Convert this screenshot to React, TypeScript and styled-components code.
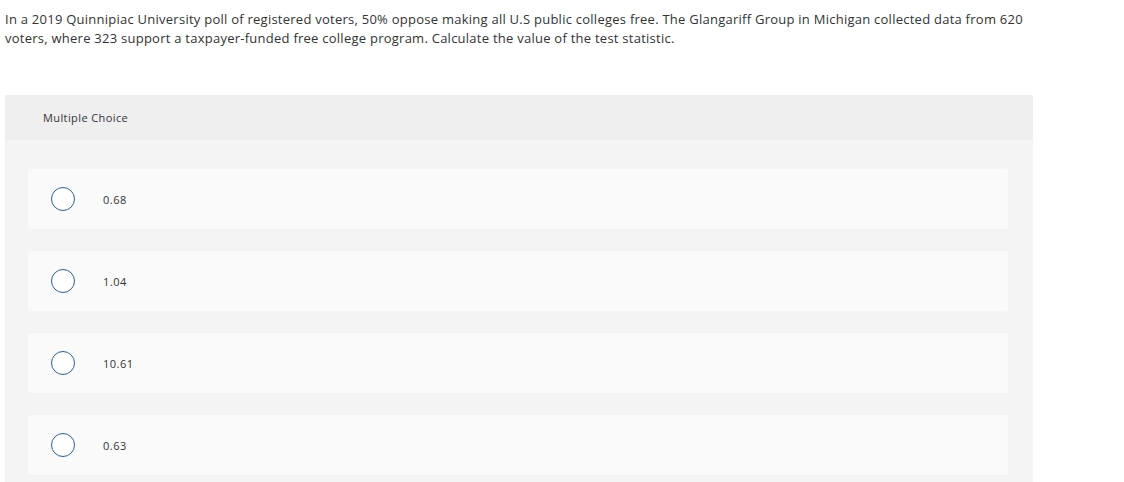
import { createGlobalStyle, styled } from "styled-components";

const options = ["0.68", "1.04", "10.61", "0.63"];

export default function App() {
	return (
		<>
			<GlobalStyle />
			<Page>
				<Question>
					In a 2019 Quinnipiac University poll of registered voters, 50% oppose
					making all U.S public colleges free. The Glangariff Group in Michigan
					collected data from 620 voters, where 323 support a taxpayer-funded
					free college program. Calculate the value of the test statistic.
				</Question>
				<Panel>
					<PanelHeader>Multiple Choice</PanelHeader>
					<OptionList>
						{options.map((value) => (
							<Option key={value}>
								<Radio />
								<OptionText>{value}</OptionText>
							</Option>
						))}
					</OptionList>
				</Panel>
			</Page>
		</>
	);
}

const GlobalStyle = createGlobalStyle`
	body {
		margin: 0;
		background: #fff;
		font-family: "Open Sans", Arial, sans-serif;
		color: #333;
	}
`;

const Page = styled.main`
	padding: 10px 0 0 5px;
	height: 482px;
	overflow: hidden;
	box-sizing: border-box;
`;

const Question = styled.p`
	margin: 0;
	max-width: 1032px;
	font-size: 13px;
	line-height: 19px;
	letter-spacing: 0.25px;
	color: #333;
`;

const Panel = styled.section`
	margin-top: 47px;
	width: 1028px;
	background: #f4f4f4;
	border-radius: 2px 2px 0 0;
`;

const PanelHeader = styled.div`
	height: 45px;
	display: flex;
	align-items: center;
	padding-left: 38px;
	background: #efefef;
	font-size: 11px;
	letter-spacing: 0.4px;
	color: #333;
	border-radius: 2px 2px 0 0;
`;

const OptionList = styled.div`
	display: flex;
	flex-direction: column;
	gap: 22px;
	padding: 29px 25px 20px 23px;
`;

const Option = styled.label`
	height: 60px;
	display: flex;
	align-items: center;
	padding-left: 23px;
	background: #fafafa;
	border-radius: 3px;
`;

const Radio = styled.span`
	width: 22px;
	height: 22px;
	border: 1.5px solid #2b5f99;
	border-radius: 50%;
	background: #fff;
	flex-shrink: 0;
`;

const OptionText = styled.span`
	margin-left: 28px;
	font-size: 11px;
	letter-spacing: 0.5px;
	color: #333;
`;
